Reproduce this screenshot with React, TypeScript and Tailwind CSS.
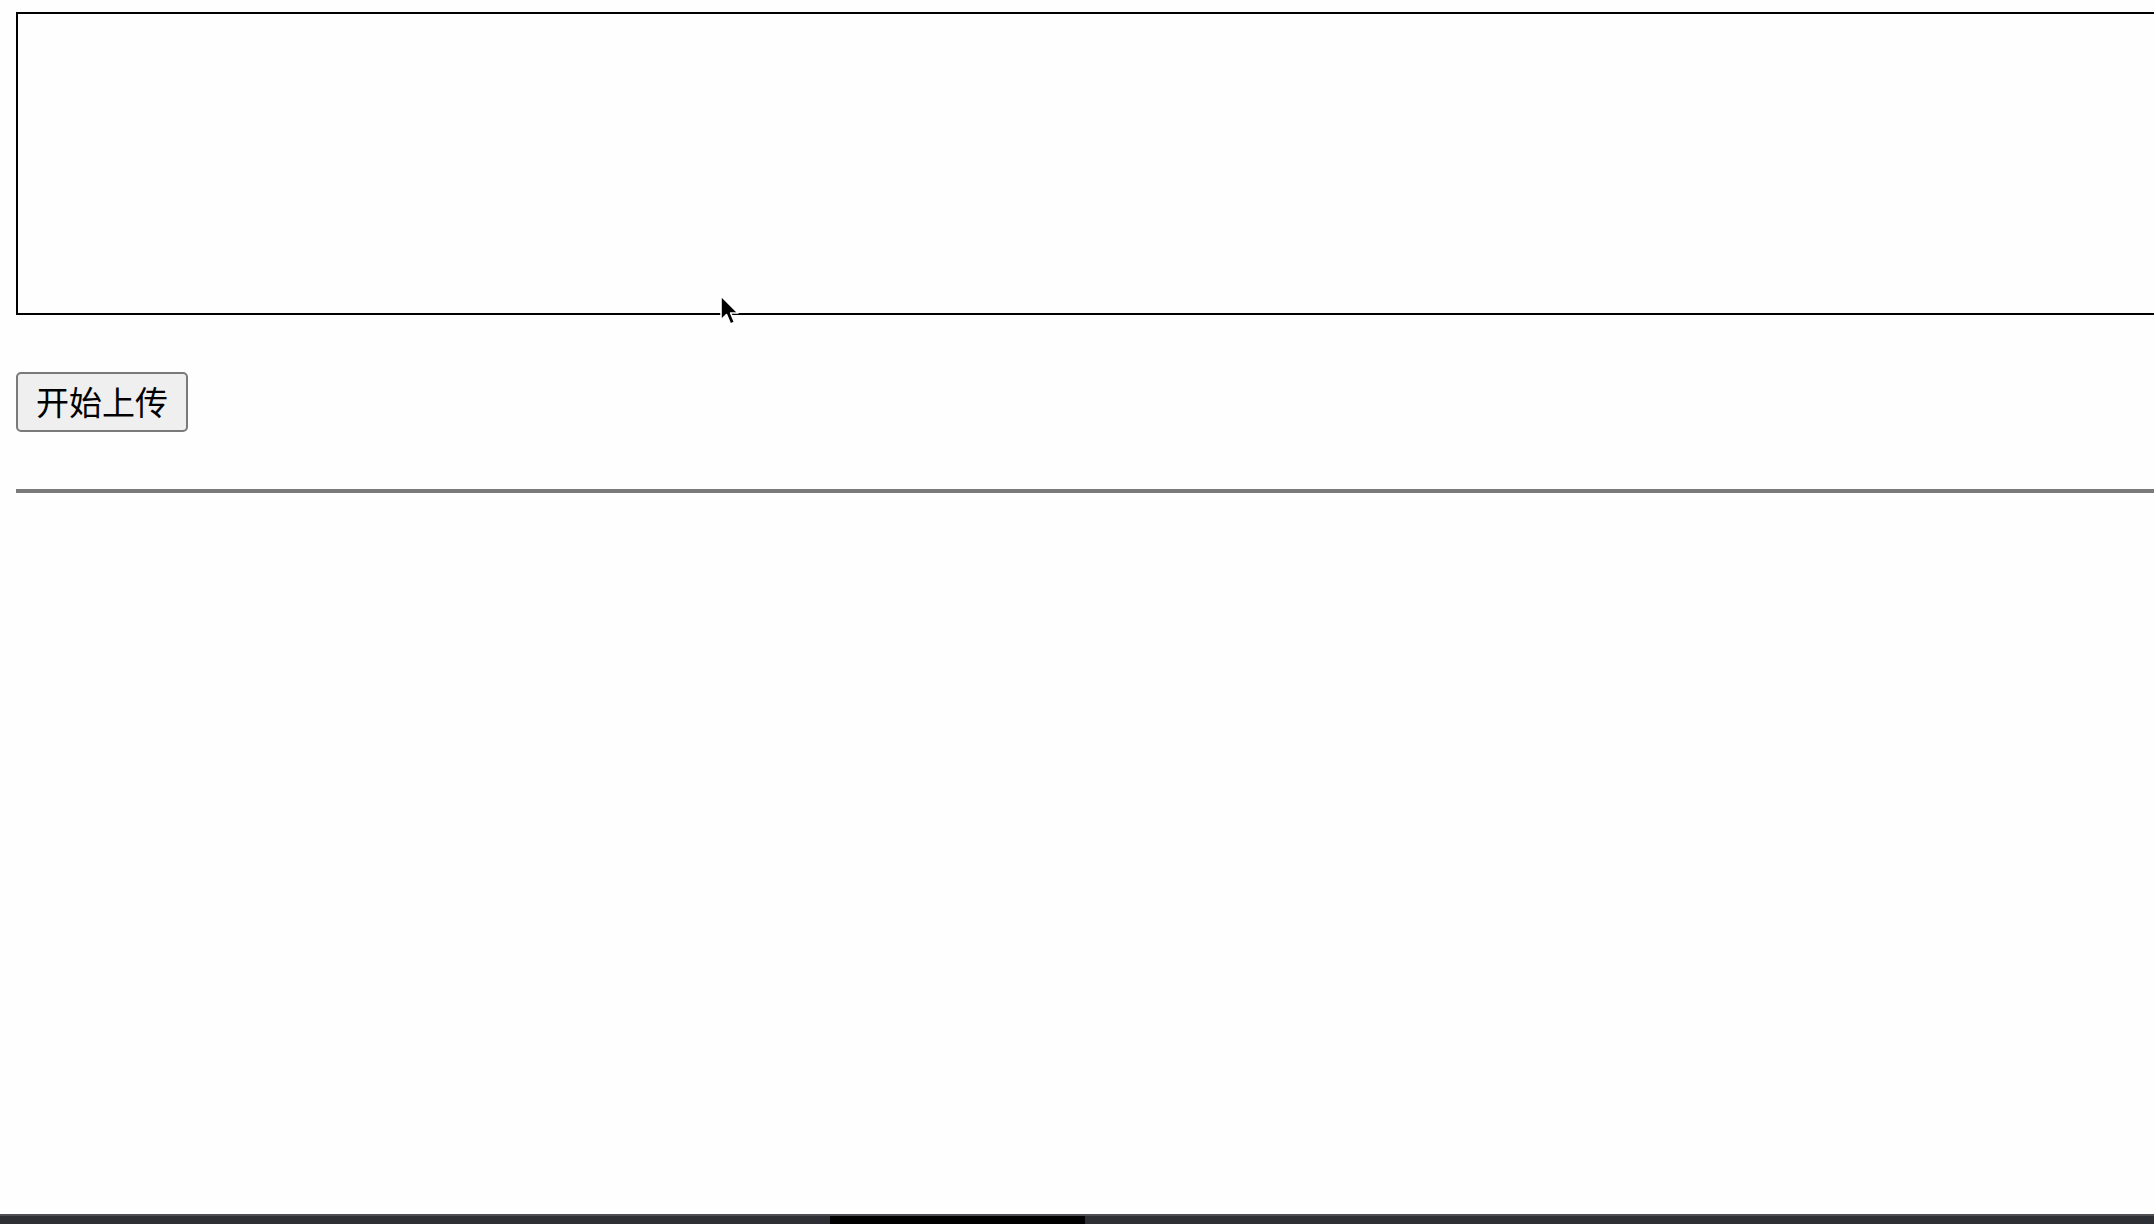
export default function App() {
  return (
    <div className="relative flex h-screen flex-col overflow-hidden bg-[#fefefe] font-['Liberation_Sans','Noto_Sans_CJK_SC',sans-serif]">
      {/* Page */}
      <main className="flex-1 pl-4 pt-3">
        <div className="h-[303px] w-[2240px] border-2 border-black" />

        <button
          type="button"
          className="mt-[57px] flex h-[60px] w-[172px] items-center justify-center rounded-[5px] border-2 border-[#7a7a7a] bg-[#efefef] pt-[2px] text-[33px] leading-none text-black"
        >
          开始上传
        </button>

        <div className="mt-[57px] h-1 w-[2240px] bg-[#7a7a7a]" />
      </main>

      {/* Bottom bar */}
      <div className="flex h-[10px] border-t-2 border-[#4e4f53] bg-[#2d2f34]">
        <div className="ml-[830px] h-full w-[255px] bg-black" />
      </div>

      {/* Mouse pointer */}
      <svg
        className="absolute left-[718px] top-[294px] h-[34px] w-[24px]"
        viewBox="0 0 24 34"
      >
        <path
          d="M3 2 L3 26 L8.5 20.5 L12.5 30 L16.5 28.3 L12.6 19 L20 19 Z"
          fill="#000"
          stroke="#fff"
          strokeWidth="1.6"
          strokeLinejoin="round"
        />
      </svg>
    </div>
  );
}
